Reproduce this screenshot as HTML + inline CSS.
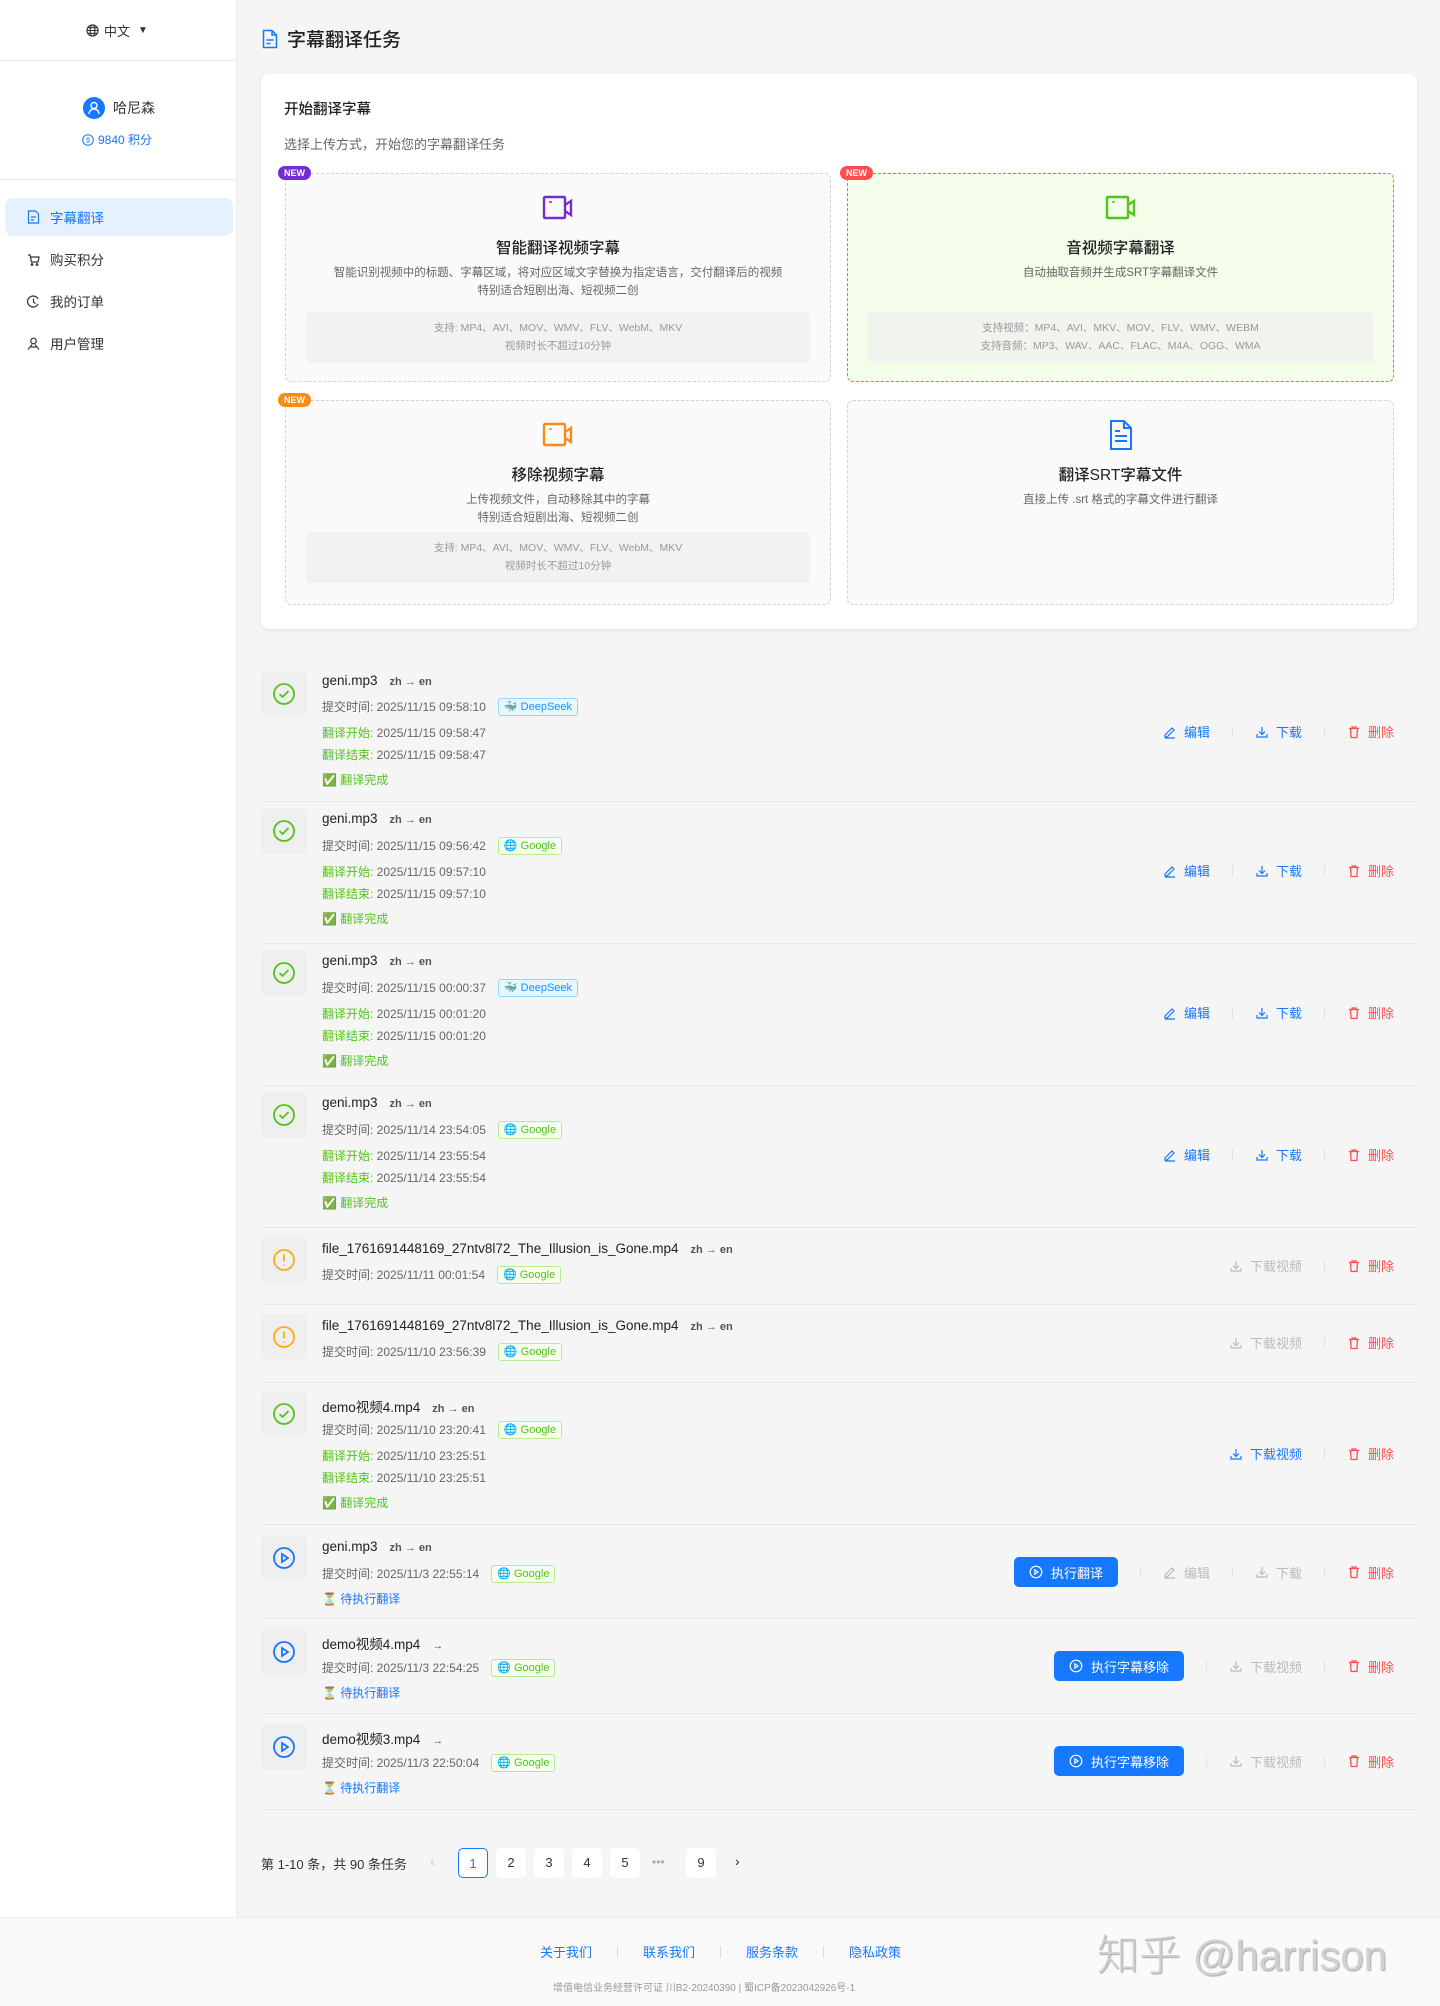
<!DOCTYPE html>
<html><head><meta charset="utf-8"><style>
*{box-sizing:border-box;margin:0;padding:0}
body{width:1440px;height:2006px;background:#f5f5f5;font-family:"Liberation Sans","Noto Sans CJK SC",sans-serif;color:#333;position:relative;overflow:hidden}
.side{position:absolute;left:0;top:0;width:237px;height:1917px;background:#fff;border-right:1px solid #eee}
.abs{position:absolute}
.menu{position:absolute;left:5px;width:228px;height:38px;display:flex;align-items:center;padding-left:22px;font-size:13.5px;color:#333;border-radius:8px}
.menu svg{margin-right:10px}
.menu.act{background:#e6f1ff;color:#1677ff}
.card{position:absolute;left:261px;top:74px;width:1156px;height:555px;background:#fff;border-radius:8px;box-shadow:0 1px 4px rgba(0,0,0,.08)}
.opt{position:absolute;border:1.5px dashed #d4d4d4;border-radius:6px;background:#fafafa;text-align:center}
.opt h3{font-size:15.5px;font-weight:500;color:#222;position:absolute;left:0;right:0}
.opt .d{font-size:11.5px;color:#666;line-height:18px;position:absolute;left:0;right:0}
.opt .box{position:absolute;left:20px;right:20px;height:51px;background:#f2f2f2;border-radius:4px;font-size:10.5px;color:#999;line-height:18px;padding-top:7px}
.opt svg{position:absolute;left:50%;margin-left:-16px}
.new{position:absolute;left:-8px;top:-8px;height:14px;padding:0 6px;border-radius:7px;color:#fff;font-size:9px;font-weight:700;line-height:14px}
.row{position:absolute;left:261px;width:1156px;border-bottom:1px solid #e6e6e6}
.ib{position:absolute;left:0;width:46px;height:46px;background:#efefef;border-radius:6px;display:flex;align-items:center;justify-content:center}
.t{position:absolute;left:61px;font-size:13px;white-space:nowrap}
.fn{font-size:13.5px;color:#222}
.lang{font-size:11px;color:#555;font-weight:600;margin-left:12px}
.m{color:#666;font-size:12px}
.g{color:#52c41a;font-size:12px}
.g span{color:#666}
.tag{display:inline-block;font-size:11px;border:1px solid;border-radius:3px;padding:0 5px;height:18px;line-height:16px;margin-left:12px;vertical-align:1px}
.tg{color:#52c41a;border-color:#b7eb8f;background:#f6ffed}
.td{color:#1890ff;border-color:#91d5ff;background:#e6f7ff}
.pend{color:#1677ff;font-size:12px}
.acts{position:absolute;right:23px;display:flex;align-items:center;font-size:13px}
.a{display:flex;align-items:center;gap:7px;color:#1677ff}
.a svg{stroke:currentColor}
.a.dis{color:#bbb}
.a.del{color:#ff4d4f}
.sep{width:1px;height:12px;background:#e3e3e3;margin:0 22px}
.btn{background:#1677ff;color:#fff;border-radius:5px;height:30px;padding:0 15px;display:flex;align-items:center;gap:8px;font-size:13px}
.pg{position:absolute;top:1848px;height:30px;width:30px;background:#fff;border-radius:5px;text-align:center;line-height:30px;font-size:13px}
</style></head><body>
<svg width="0" height="0" style="position:absolute">
<defs>
<symbol id="ed" viewBox="0 0 14 14"><path d="M2 10l7-7 2 2-7 7H2z M2 13h10" fill="none" stroke-width="1.2"/></symbol>
<symbol id="dl" viewBox="0 0 14 14"><path d="M7 2v7M4 6.5l3 3 3-3M2 9v3h10V9" fill="none" stroke-width="1.2"/></symbol>
<symbol id="tr" viewBox="0 0 14 14"><path d="M2 3.5h10M5 3.5V2h4v1.5M3.5 3.5l.6 9h5.8l.6-9" fill="none" stroke-width="1.3"/></symbol>
<symbol id="pl" viewBox="0 0 14 14"><circle cx="7" cy="7" r="5.8" fill="none" stroke="#fff" stroke-width="1.2"/><path d="M5.8 4.8v4.4l3.3-2.2z" fill="none" stroke="#fff" stroke-width="1.1"/></symbol>
</defs></svg>
<div class="side">
 <div class="abs" style="left:86px;top:21px;font-size:13px;display:flex;align-items:center;gap:5px">
  <svg width="13" height="13" viewBox="0 0 14 14" fill="none" stroke="#333" stroke-width="1.2"><circle cx="7" cy="7" r="6"/><ellipse cx="7" cy="7" rx="2.6" ry="6"/><path d="M1 7h12M2 4h10M2 10h10"/></svg>中文 <span style="font-size:10px;margin-left:3px">▼</span></div>
 <div class="abs" style="left:0;top:60px;width:237px;height:1px;background:#eee"></div>
 <div class="abs" style="left:83px;top:97px;display:flex;align-items:center;gap:8px;font-size:14px">
  <svg width="22" height="22" viewBox="0 0 22 22"><circle cx="11" cy="11" r="11" fill="#1677ff"/><circle cx="11" cy="8.5" r="3" fill="none" stroke="#fff" stroke-width="1.4"/><path d="M6 17c0-3 2.3-5 5-5s5 2 5 5" fill="none" stroke="#fff" stroke-width="1.4"/></svg>哈尼森</div>
 <div class="abs" style="left:82px;top:131px;font-size:12px;color:#1677ff;display:flex;align-items:center;gap:4px">
  <svg width="12" height="12" viewBox="0 0 12 12" fill="none" stroke="#1677ff" stroke-width="1"><circle cx="6" cy="6" r="5.3"/><text x="6" y="8.5" font-size="7" text-anchor="middle" fill="#1677ff" stroke="none">$</text></svg>9840 积分</div>
 <div class="abs" style="left:0;top:179px;width:237px;height:1px;background:#eee"></div>
 <div class="menu act" style="top:198px"><svg width="13" height="14" viewBox="0 0 13 14" fill="none" stroke="#1677ff" stroke-width="1.2"><path d="M1.5 1h7l3 3v9h-10z M4 7h5M4 10h3"/></svg>字幕翻译</div>
 <div class="menu" style="top:240px"><svg width="13" height="13" viewBox="0 0 13 13" fill="none" stroke="#333" stroke-width="1.2"><path d="M1 2h2l1.5 7h6.5l1-5H4"/><circle cx="5" cy="11.5" r=".8"/><circle cx="10" cy="11.5" r=".8"/></svg>购买积分</div>
 <div class="menu" style="top:282px"><svg width="13" height="13" viewBox="0 0 13 13" fill="none" stroke="#333" stroke-width="1.2"><path d="M11 4A5.5 5.5 0 1 0 11 9M6.5 3.5v3.5l2 1.5"/></svg>我的订单</div>
 <div class="menu" style="top:324px"><svg width="13" height="13" viewBox="0 0 13 13" fill="none" stroke="#333" stroke-width="1.2"><circle cx="6.5" cy="4" r="2.8"/><path d="M1 12.5l4-5M12 12.5l-4-5M4 10h5"/></svg>用户管理</div>
</div>

<div class="abs" style="left:262px;top:25px;display:flex;align-items:center;gap:9px;font-size:19px;font-weight:500;color:#222">
 <svg width="16" height="20" viewBox="0 0 16 20" fill="none" stroke="#1677ff" stroke-width="1.5"><path d="M1.5 1.5h8.5l4.5 4.5v12.5h-13z M10 1.5v4.5h4.5 M4.5 11h7M4.5 14.5h4"/></svg>字幕翻译任务</div>

<div class="card">
 <div class="abs" style="left:23px;top:24px;font-size:14.5px;font-weight:500;color:#222">开始翻译字幕</div>
 <div class="abs" style="left:23px;top:60px;font-size:13px;color:#666">选择上传方式，开始您的字幕翻译任务</div>
 <div class="opt" style="left:24px;top:99px;width:546px;height:209px">
  <div class="new" style="background:#722ed1">NEW</div>
  <svg style="top:20px" width="32" height="28" viewBox="0 0 32 28" fill="none" stroke="#722ed1" stroke-width="2.4"><rect x="2" y="3" width="21" height="21" rx="1"/><path d="M23 11l6-4v14l-6-4"/><path d="M7 8h3" stroke-width="1.5"/></svg>
  <h3 style="top:62px">智能翻译视频字幕</h3>
  <div class="d" style="top:90px">智能识别视频中的标题、字幕区域，将对应区域文字替换为指定语言，交付翻译后的视频<br>特别适合短剧出海、短视频二创</div>
  <div class="box" style="top:138px">支持: MP4、AVI、MOV、WMV、FLV、WebM、MKV<br>视频时长不超过10分钟</div>
 </div>
 <div class="opt" style="left:586px;top:99px;width:547px;height:209px;border-color:#52c41a;background:#f4fdea">
  <div class="new" style="background:#ff4d4f">NEW</div>
  <svg style="top:20px" width="32" height="28" viewBox="0 0 32 28" fill="none" stroke="#52c41a" stroke-width="2.4"><rect x="2" y="3" width="21" height="21" rx="1"/><path d="M23 11l6-4v14l-6-4"/><path d="M7 8h3" stroke-width="1.5"/></svg>
  <h3 style="top:62px">音视频字幕翻译</h3>
  <div class="d" style="top:90px">自动抽取音频并生成SRT字幕翻译文件</div>
  <div class="box" style="top:138px;background:#f1f3ef">支持视频：MP4、AVI、MKV、MOV、FLV、WMV、WEBM<br>支持音频：MP3、WAV、AAC、FLAC、M4A、OGG、WMA</div>
 </div>
 <div class="opt" style="left:24px;top:326px;width:546px;height:205px">
  <div class="new" style="background:#fa8c16">NEW</div>
  <svg style="top:20px" width="32" height="28" viewBox="0 0 32 28" fill="none" stroke="#fa8c16" stroke-width="2.4"><rect x="2" y="3" width="21" height="21" rx="1"/><path d="M23 11l6-4v14l-6-4"/><path d="M7 8h3" stroke-width="1.5"/></svg>
  <h3 style="top:62px">移除视频字幕</h3>
  <div class="d" style="top:90px">上传视频文件，自动移除其中的字幕<br>特别适合短剧出海、短视频二创</div>
  <div class="box" style="top:131px">支持: MP4、AVI、MOV、WMV、FLV、WebM、MKV<br>视频时长不超过10分钟</div>
 </div>
 <div class="opt" style="left:586px;top:326px;width:547px;height:205px">
  <svg style="top:18px" width="32" height="32" viewBox="0 0 32 32" fill="none" stroke="#1677ff" stroke-width="2"><path d="M6 2h13l7 7v21H6z M19 2v7h7 M10 17h12M10 22h12M10 12h5"/></svg>
  <h3 style="top:62px">翻译SRT字幕文件</h3>
  <div class="d" style="top:90px">直接上传 .srt 格式的字幕文件进行翻译</div>
 </div>
</div>

<div class="row" style="top:665px;height:137px">
 <div class="ib" style="top:6px"><svg width="24" height="24" viewBox="0 0 24 24" fill="none" stroke="#52c41a" stroke-width="1.8"><circle cx="12" cy="12" r="10"/><path d="M7.5 12l3 3 6-6"/></svg></div>
 <div class="t" style="top:8px"><span class="fn">geni.mp3</span><span class="lang">zh → en</span></div>
 <div class="t m" style="top:33px">提交时间: 2025/11/15 09:58:10<span class="tag td">🐳 DeepSeek</span></div>
 <div class="t g" style="top:59px">翻译开始: <span>2025/11/15 09:58:47</span></div>
 <div class="t g" style="top:81px">翻译结束: <span>2025/11/15 09:58:47</span></div>
 <div class="t g" style="top:106px">✅ 翻译完成</div>
 <div class="acts" style="top:57px"><div class="a"><svg width="14" height="14"><use href="#ed"/></svg>编辑</div><div class="sep"></div><div class="a"><svg width="14" height="14"><use href="#dl"/></svg>下载</div><div class="sep"></div><div class="a del"><svg width="14" height="14"><use href="#tr"/></svg>删除</div></div>
</div>
<div class="row" style="top:802px;height:142px">
 <div class="ib" style="top:6px"><svg width="24" height="24" viewBox="0 0 24 24" fill="none" stroke="#52c41a" stroke-width="1.8"><circle cx="12" cy="12" r="10"/><path d="M7.5 12l3 3 6-6"/></svg></div>
 <div class="t" style="top:9px"><span class="fn">geni.mp3</span><span class="lang">zh → en</span></div>
 <div class="t m" style="top:35px">提交时间: 2025/11/15 09:56:42<span class="tag tg">🌐 Google</span></div>
 <div class="t g" style="top:61px">翻译开始: <span>2025/11/15 09:57:10</span></div>
 <div class="t g" style="top:83px">翻译结束: <span>2025/11/15 09:57:10</span></div>
 <div class="t g" style="top:108px">✅ 翻译完成</div>
 <div class="acts" style="top:59px"><div class="a"><svg width="14" height="14"><use href="#ed"/></svg>编辑</div><div class="sep"></div><div class="a"><svg width="14" height="14"><use href="#dl"/></svg>下载</div><div class="sep"></div><div class="a del"><svg width="14" height="14"><use href="#tr"/></svg>删除</div></div>
</div>
<div class="row" style="top:944px;height:142px">
 <div class="ib" style="top:6px"><svg width="24" height="24" viewBox="0 0 24 24" fill="none" stroke="#52c41a" stroke-width="1.8"><circle cx="12" cy="12" r="10"/><path d="M7.5 12l3 3 6-6"/></svg></div>
 <div class="t" style="top:9px"><span class="fn">geni.mp3</span><span class="lang">zh → en</span></div>
 <div class="t m" style="top:35px">提交时间: 2025/11/15 00:00:37<span class="tag td">🐳 DeepSeek</span></div>
 <div class="t g" style="top:61px">翻译开始: <span>2025/11/15 00:01:20</span></div>
 <div class="t g" style="top:83px">翻译结束: <span>2025/11/15 00:01:20</span></div>
 <div class="t g" style="top:108px">✅ 翻译完成</div>
 <div class="acts" style="top:59px"><div class="a"><svg width="14" height="14"><use href="#ed"/></svg>编辑</div><div class="sep"></div><div class="a"><svg width="14" height="14"><use href="#dl"/></svg>下载</div><div class="sep"></div><div class="a del"><svg width="14" height="14"><use href="#tr"/></svg>删除</div></div>
</div>
<div class="row" style="top:1086px;height:142px">
 <div class="ib" style="top:6px"><svg width="24" height="24" viewBox="0 0 24 24" fill="none" stroke="#52c41a" stroke-width="1.8"><circle cx="12" cy="12" r="10"/><path d="M7.5 12l3 3 6-6"/></svg></div>
 <div class="t" style="top:9px"><span class="fn">geni.mp3</span><span class="lang">zh → en</span></div>
 <div class="t m" style="top:35px">提交时间: 2025/11/14 23:54:05<span class="tag tg">🌐 Google</span></div>
 <div class="t g" style="top:61px">翻译开始: <span>2025/11/14 23:55:54</span></div>
 <div class="t g" style="top:83px">翻译结束: <span>2025/11/14 23:55:54</span></div>
 <div class="t g" style="top:108px">✅ 翻译完成</div>
 <div class="acts" style="top:59px"><div class="a"><svg width="14" height="14"><use href="#ed"/></svg>编辑</div><div class="sep"></div><div class="a"><svg width="14" height="14"><use href="#dl"/></svg>下载</div><div class="sep"></div><div class="a del"><svg width="14" height="14"><use href="#tr"/></svg>删除</div></div>
</div>
<div class="row" style="top:1228px;height:77px">
 <div class="ib" style="top:9px"><svg width="24" height="24" viewBox="0 0 24 24" fill="none" stroke="#faad14" stroke-width="1.8"><circle cx="12" cy="12" r="10"/><path d="M12 6.5v7M12 16.5v1"/></svg></div>
 <div class="t" style="top:13px"><span class="fn">file_1761691448169_27ntv8l72_The_Illusion_is_Gone.mp4</span><span class="lang">zh → en</span></div>
 <div class="t m" style="top:38px">提交时间: 2025/11/11 00:01:54<span class="tag tg">🌐 Google</span></div>
 <div class="acts" style="top:28px"><div class="a dis"><svg width="14" height="14"><use href="#dl"/></svg>下载视频</div><div class="sep"></div><div class="a del"><svg width="14" height="14"><use href="#tr"/></svg>删除</div></div>
</div>
<div class="row" style="top:1305px;height:78px">
 <div class="ib" style="top:9px"><svg width="24" height="24" viewBox="0 0 24 24" fill="none" stroke="#faad14" stroke-width="1.8"><circle cx="12" cy="12" r="10"/><path d="M12 6.5v7M12 16.5v1"/></svg></div>
 <div class="t" style="top:13px"><span class="fn">file_1761691448169_27ntv8l72_The_Illusion_is_Gone.mp4</span><span class="lang">zh → en</span></div>
 <div class="t m" style="top:38px">提交时间: 2025/11/10 23:56:39<span class="tag tg">🌐 Google</span></div>
 <div class="acts" style="top:28px"><div class="a dis"><svg width="14" height="14"><use href="#dl"/></svg>下载视频</div><div class="sep"></div><div class="a del"><svg width="14" height="14"><use href="#tr"/></svg>删除</div></div>
</div>
<div class="row" style="top:1383px;height:142px">
 <div class="ib" style="top:8px"><svg width="24" height="24" viewBox="0 0 24 24" fill="none" stroke="#52c41a" stroke-width="1.8"><circle cx="12" cy="12" r="10"/><path d="M7.5 12l3 3 6-6"/></svg></div>
 <div class="t" style="top:13px"><span class="fn">demo视频4.mp4</span><span class="lang">zh → en</span></div>
 <div class="t m" style="top:38px">提交时间: 2025/11/10 23:20:41<span class="tag tg">🌐 Google</span></div>
 <div class="t g" style="top:64px">翻译开始: <span>2025/11/10 23:25:51</span></div>
 <div class="t g" style="top:86px">翻译结束: <span>2025/11/10 23:25:51</span></div>
 <div class="t g" style="top:111px">✅ 翻译完成</div>
 <div class="acts" style="top:61px"><div class="a"><svg width="14" height="14"><use href="#dl"/></svg>下载视频</div><div class="sep"></div><div class="a del"><svg width="14" height="14"><use href="#tr"/></svg>删除</div></div>
</div>
<div class="row" style="top:1525px;height:94px">
 <div class="ib" style="top:10px"><svg width="24" height="24" viewBox="0 0 24 24" fill="none" stroke="#1677ff" stroke-width="1.8"><circle cx="12" cy="12" r="10"/><path d="M10 8v8l6-4z"/></svg></div>
 <div class="t" style="top:14px"><span class="fn">geni.mp3</span><span class="lang">zh → en</span></div>
 <div class="t m" style="top:40px">提交时间: 2025/11/3 22:55:14<span class="tag tg">🌐 Google</span></div>
 <div class="t pend" style="top:65px">⏳ 待执行翻译</div>
 <div class="acts" style="top:32px"><div class="btn"><svg width="14" height="14"><use href="#pl"/></svg>执行翻译</div><div class="sep"></div><div class="a dis"><svg width="14" height="14"><use href="#ed"/></svg>编辑</div><div class="sep"></div><div class="a dis"><svg width="14" height="14"><use href="#dl"/></svg>下载</div><div class="sep"></div><div class="a del"><svg width="14" height="14"><use href="#tr"/></svg>删除</div></div>
</div>
<div class="row" style="top:1619px;height:95px">
 <div class="ib" style="top:10px"><svg width="24" height="24" viewBox="0 0 24 24" fill="none" stroke="#1677ff" stroke-width="1.8"><circle cx="12" cy="12" r="10"/><path d="M10 8v8l6-4z"/></svg></div>
 <div class="t" style="top:14px"><span class="fn">demo视频4.mp4</span><span class="lang">→</span></div>
 <div class="t m" style="top:40px">提交时间: 2025/11/3 22:54:25<span class="tag tg">🌐 Google</span></div>
 <div class="t pend" style="top:65px">⏳ 待执行翻译</div>
 <div class="acts" style="top:32px"><div class="btn"><svg width="14" height="14"><use href="#pl"/></svg>执行字幕移除</div><div class="sep"></div><div class="a dis"><svg width="14" height="14"><use href="#dl"/></svg>下载视频</div><div class="sep"></div><div class="a del"><svg width="14" height="14"><use href="#tr"/></svg>删除</div></div>
</div>
<div class="row" style="top:1714px;height:96px">
 <div class="ib" style="top:10px"><svg width="24" height="24" viewBox="0 0 24 24" fill="none" stroke="#1677ff" stroke-width="1.8"><circle cx="12" cy="12" r="10"/><path d="M10 8v8l6-4z"/></svg></div>
 <div class="t" style="top:14px"><span class="fn">demo视频3.mp4</span><span class="lang">→</span></div>
 <div class="t m" style="top:40px">提交时间: 2025/11/3 22:50:04<span class="tag tg">🌐 Google</span></div>
 <div class="t pend" style="top:65px">⏳ 待执行翻译</div>
 <div class="acts" style="top:32px"><div class="btn"><svg width="14" height="14"><use href="#pl"/></svg>执行字幕移除</div><div class="sep"></div><div class="a dis"><svg width="14" height="14"><use href="#dl"/></svg>下载视频</div><div class="sep"></div><div class="a del"><svg width="14" height="14"><use href="#tr"/></svg>删除</div></div>
</div>

<div class="abs" style="left:261px;top:1854px;font-size:13px;color:#333">第 1-10 条，共 90 条任务</div>
<div class="abs" style="left:430px;top:1853px;font-size:14px;color:#ccc">‹</div>
<div class="pg" style="left:458px;border:1px solid #1677ff;color:#1677ff">1</div>
<div class="pg" style="left:496px">2</div>
<div class="pg" style="left:534px">3</div>
<div class="pg" style="left:572px">4</div>
<div class="pg" style="left:610px">5</div>
<div class="abs" style="left:652px;top:1855px;font-size:12px;color:#aaa">•••</div>
<div class="pg" style="left:686px">9</div>
<div class="abs" style="left:735px;top:1853px;font-size:14px;color:#333">›</div>

<div class="abs" style="left:0;top:1917px;width:1440px;height:89px;background:#fafafa;border-top:1px solid #eee"></div>
<div class="abs" style="left:540px;top:1942px;font-size:13px;color:#1677ff;display:flex;align-items:center">关于我们<span style="width:1px;height:12px;background:#ddd;margin:0 25px"></span>联系我们<span style="width:1px;height:12px;background:#ddd;margin:0 25px"></span>服务条款<span style="width:1px;height:12px;background:#ddd;margin:0 25px"></span>隐私政策</div>
<div class="abs" style="left:553px;top:1979px;font-size:10px;color:#999">增值电信业务经营许可证 川B2-20240390 | 蜀ICP备2023042926号-1</div>
<div class="abs" style="left:1097px;top:1922px;font-size:42px;font-weight:300;color:#d0d0d0;text-shadow:1px 1px 1px #aaa">知乎 @harrison</div>
</body></html>
